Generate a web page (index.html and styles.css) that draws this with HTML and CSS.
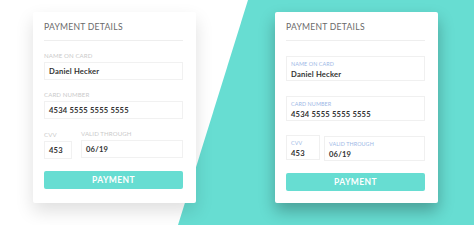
FILE: index.html
```html
<!DOCTYPE html>
<html lang="en">
<head>
    <meta charset="UTF-8">
    <title>Payment Details</title>
    <link rel="stylesheet" href="styles.css">
</head>
<body>
    <div class="stage">
        <div class="card card-plain">
            <div class="card-title">PAYMENT DETAILS</div>

            <div class="field">
                <div class="label">NAME ON CARD</div>
                <div class="input">Daniel Hecker</div>
            </div>

            <div class="field">
                <div class="label">CARD NUMBER</div>
                <div class="input">4534 5555 5555 5555</div>
            </div>

            <div class="row">
                <div class="field field-cvv">
                    <div class="label">CVV</div>
                    <div class="input">453</div>
                </div>
                <div class="field field-grow">
                    <div class="label">VALID THROUGH</div>
                    <div class="input">06/19</div>
                </div>
            </div>

            <button class="btn-pay">PAYMENT</button>
        </div>

        <div class="card card-boxed">
            <div class="card-title">PAYMENT DETAILS</div>

            <div class="box">
                <div class="label">NAME ON CARD</div>
                <div class="value">Daniel Hecker</div>
            </div>

            <div class="box">
                <div class="label">CARD NUMBER</div>
                <div class="value">4534 5555 5555 5555</div>
            </div>

            <div class="row">
                <div class="box box-cvv">
                    <div class="label">CVV</div>
                    <div class="value">453</div>
                </div>
                <div class="box box-grow">
                    <div class="label">VALID THROUGH</div>
                    <div class="value">06/19</div>
                </div>
            </div>

            <button class="btn-pay">PAYMENT</button>
        </div>
    </div>
</body>
</html>
```

FILE: styles.css
```css
* {
    margin: 0;
    padding: 0;
    box-sizing: border-box;
}

body {
    width: 474px;
    height: 225px;
    overflow: hidden;
    font-family: "Lato", "Open Sans", sans-serif;
    background: #fff;
}

.stage {
    position: relative;
    height: 225px;
    display: flex;
    align-items: flex-start;
    padding: 12px 0 0 33px;
    gap: 79px;
}

/* the teal slanted backdrop */
.stage::before {
    content: '';
    position: absolute;
    inset: 0;
    background: #67ddd2;
    clip-path: polygon(248px 0, 474px 0, 474px 225px, 178px 225px);
}

.card {
    position: relative;
    width: 163px;
    height: 191px;
    background: #fff;
    border-radius: 2px;
    padding: 8px 13px 0 11px;
}

.card-plain {
    box-shadow: 0 8px 18px rgba(0, 0, 0, 0.13);
}

.card-boxed {
    box-shadow: 0 8px 16px rgba(0, 0, 0, 0.28);
}

.card-title {
    font-size: 8.6px;
    line-height: 14px;
    color: #6a6a6a;
    letter-spacing: 0.25px;
    padding-bottom: 6px;
    border-bottom: 1px solid #eeeeee;
}

.label {
    font-size: 6.1px;
    line-height: 8px;
    color: #cacaca;
    letter-spacing: 0.1px;
}

/* left card: label above input */
.card-plain .field {
    margin-top: 11px;
}

.card-plain .field:first-of-type {
    margin-top: 12px;
}

.card-plain .label {
    margin-bottom: 2px;
}

.input {
    height: 18px;
    border: 1px solid #f1f1f1;
    padding: 0 4px;
    font-size: 7.6px;
    font-weight: 700;
    line-height: 16px;
    color: #333;
    letter-spacing: 0.2px;
}

.row {
    display: flex;
}

.card-plain .row {
    gap: 9px;
}

.field-cvv {
    width: 28px;
}

.field-grow,
.box-grow {
    flex: 1;
}

/* right card: label inside box */
.box {
    height: 25px;
    margin-top: 15px;
    border: 1px solid #f0f0f0;
    padding: 3px 4px 0;
}

.card-boxed .box:first-of-type {
    margin-top: 14px;
}

.card-boxed .row {
    gap: 4px;
}

.card-boxed .label {
    font-size: 5.4px;
    color: #9db8e6;
}

.value {
    font-size: 7.6px;
    font-weight: 700;
    line-height: 12px;
    color: #333;
    letter-spacing: 0.2px;
}

.box-cvv {
    width: 34px;
}

.btn-pay {
    display: block;
    width: 100%;
    height: 18px;
    margin-top: 12px;
    border: none;
    border-radius: 2px;
    background: #67ddd2;
    color: #fff;
    font-family: "Lato", "Open Sans", sans-serif;
    font-size: 8.5px;
    font-weight: 700;
    letter-spacing: 0.4px;
}
```
